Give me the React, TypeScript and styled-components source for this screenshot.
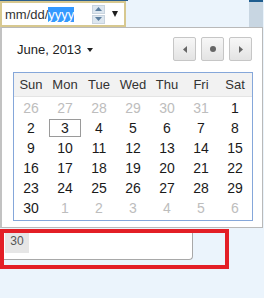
import React from "react";
import styled, { createGlobalStyle } from "styled-components";

const Global = createGlobalStyle`
  html, body { margin: 0; padding: 0; background: #ebf4fc; }
  body { font-family: "Liberation Sans", Arial, sans-serif; }
`;

const Page = styled.div`
  width: 264px;
  height: 298px;
  background: #ebf4fc;
  overflow: hidden;
`;

const TopBar = styled.div`
  display: flex;
  height: 27px;
`;

const InputWrap = styled.div`
  width: 128px;
  border-top: 1px solid #2b5f8c;
  box-sizing: border-box;
`;

const DateInput = styled.div`
  box-sizing: border-box;
  width: 126px;
  height: 26px;
  border: 2px solid #d7c88f;
  background: #fff;
  display: flex;
  align-items: center;
  padding-left: 3px;
  font-size: 13px;
  color: #333;
`;

const Selected = styled.span`
  background: #3399ff;
  color: #fff;
  line-height: 15px;
`;

const Spin = styled.div`
  margin-left: auto;
  display: flex;
  flex-direction: column;
  gap: 1px;
  width: 13px;
`;

const SpinHalf = styled.div`
  height: 7px;
  background: #dce6ef;
  border: 1px solid #c8d3de;
  display: flex;
  align-items: center;
  justify-content: center;
`;

const DropArrow = styled.div`
  width: 0;
  height: 0;
  margin: 0 6px 0 7px;
  border-left: 3.5px solid transparent;
  border-right: 3.5px solid transparent;
  border-top: 6px solid #1e1e1e;
`;

const Filler = styled.div`
  flex: 1;
`;

const ScrollStub = styled.div`
  width: 14px;
  margin-right: 1px;
  background: #c8d6e2;
  border-top: 2px solid #1f5d8f;
`;

const Popup = styled.div`
  box-sizing: border-box;
  width: 263px;
  height: 201px;
  background: #fff;
  border: 1px solid #b9b9b9;
  border-left: 2px solid #c2c2c2;
  padding: 9px 10px 0 10px;
`;

const Header = styled.div`
  display: flex;
  align-items: center;
  height: 24px;
`;

const Title = styled.div`
  display: flex;
  align-items: center;
  gap: 6px;
  padding-left: 5px;
  font-size: 13px;
  color: #222;
`;

const Caret = styled.span`
  width: 0;
  height: 0;
  border-left: 3px solid transparent;
  border-right: 3px solid transparent;
  border-top: 4px solid #222;
  margin-top: 1px;
`;

const NavGroup = styled.div`
  margin-left: auto;
  display: flex;
  gap: 5px;
`;

const NavButton = styled.div`
  box-sizing: border-box;
  width: 23px;
  height: 24px;
  border: 1px solid #c6c6c6;
  border-radius: 2px;
  background: linear-gradient(#f7f7f7, #e3e3e3);
  display: flex;
  align-items: center;
  justify-content: center;
`;

const Table = styled.div`
  box-sizing: border-box;
  margin-top: 11px;
  margin-left: 1px;
  width: 240px;
  border: 1px solid #85a7da;
  padding-bottom: 2px;
`;

const HeadRow = styled.div`
  display: grid;
  grid-template-columns: repeat(7, 34px);
  height: 23px;
  background: #f2f2f2;
  border-bottom: 1px solid #e4e4e4;
  margin-bottom: 1px;
  align-items: center;
  font-size: 13px;
  color: #333;
`;

const Cell = styled.div`
  text-align: center;
`;

const Row = styled.div`
  display: grid;
  grid-template-columns: repeat(7, 34px);
  height: 20px;
  align-items: center;
`;

const Day = styled.div<{ $muted?: boolean; $today?: boolean }>`
  box-sizing: border-box;
  height: 18px;
  margin: 0 1px;
  display: flex;
  align-items: center;
  justify-content: center;
  font-size: 14px;
  color: ${(p) => (p.$muted ? "#bdbdbd" : "#1a1a1a")};
  border: 1px solid ${(p) => (p.$today ? "#9a9a9a" : "transparent")};
`;

const RedFrame = styled.div`
  box-sizing: border-box;
  width: 229px;
  height: 40px;
  margin-top: 1px;
  border: 4px solid #e31f26;
`;

const WhiteBox = styled.div`
  box-sizing: border-box;
  width: 189px;
  height: 27px;
  background: #fff;
  border-right: 1px solid #a8a8a8;
  border-bottom: 1px solid #a8a8a8;
  border-bottom-right-radius: 4px;
  padding-left: 1px;
`;

const Chip = styled.div`
  width: 24px;
  height: 20px;
  background: #e6e6e6;
  font-size: 12px;
  color: #555;
  text-align: center;
  line-height: 16px;
`;

const Tri = ({ dir }: { dir: "up" | "down" | "left" | "right" }) => {
  const pts: Record<string, string> = {
    up: "0,4 3.5,0 7,4",
    down: "0,0 7,0 3.5,4",
    left: "4,0 4,7 0,3.5",
    right: "0,0 0,7 4,3.5",
  };
  const w = dir === "up" || dir === "down" ? 7 : 4;
  const h = dir === "up" || dir === "down" ? 4 : 7;
  return (
    <svg width={w} height={h} viewBox={`0 0 ${w} ${h}`}>
      <polygon points={pts[dir]} fill={dir === "up" || dir === "down" ? "#5b7e9f" : "#666"} />
    </svg>
  );
};

const weeks: [number, boolean][][] = (() => {
  const cells: [number, boolean][] = [];
  for (let d = 26; d <= 31; d++) cells.push([d, true]);
  for (let d = 1; d <= 30; d++) cells.push([d, false]);
  for (let d = 1; d <= 6; d++) cells.push([d, true]);
  const out: [number, boolean][][] = [];
  for (let i = 0; i < cells.length; i += 7) out.push(cells.slice(i, i + 7));
  return out;
})();

export default function App() {
  return (
    <Page>
      <Global />
      <TopBar>
        <InputWrap>
          <DateInput>
            <span>mm/dd/</span>
            <Selected>yyyy</Selected>
            <Spin>
              <SpinHalf>
                <Tri dir="up" />
              </SpinHalf>
              <SpinHalf>
                <Tri dir="down" />
              </SpinHalf>
            </Spin>
            <DropArrow />
          </DateInput>
        </InputWrap>
        <Filler />
        <ScrollStub />
      </TopBar>
      <Popup>
        <Header>
          <Title>
            June, 2013 <Caret />
          </Title>
          <NavGroup>
            <NavButton>
              <Tri dir="left" />
            </NavButton>
            <NavButton>
              <svg width="6" height="6" viewBox="0 0 6 6">
                <circle cx="3" cy="3" r="3" fill="#666" />
              </svg>
            </NavButton>
            <NavButton>
              <Tri dir="right" />
            </NavButton>
          </NavGroup>
        </Header>
        <Table>
          <HeadRow>
            {["Sun", "Mon", "Tue", "Wed", "Thu", "Fri", "Sat"].map((d) => (
              <Cell key={d}>{d}</Cell>
            ))}
          </HeadRow>
          {weeks.map((w, i) => (
            <Row key={i}>
              {w.map(([d, muted], j) => (
                <Day key={j} $muted={muted} $today={!muted && d === 3}>
                  {d}
                </Day>
              ))}
            </Row>
          ))}
        </Table>
      </Popup>
      <RedFrame>
        <WhiteBox>
          <Chip>30</Chip>
        </WhiteBox>
      </RedFrame>
    </Page>
  );
}
